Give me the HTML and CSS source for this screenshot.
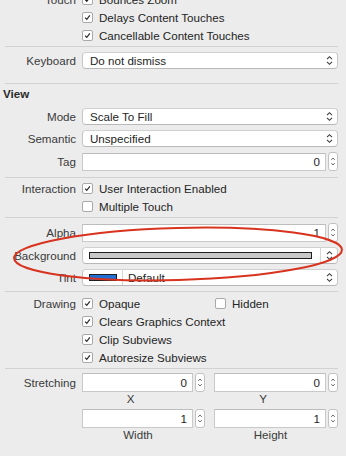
FILE: index.html
```html
<!DOCTYPE html>
<html lang="en">

<head>
    <meta charset="UTF-8">
    <meta name="viewport" content="width=device-width, initial-scale=1.0">
    <title>Attributes Inspector</title>
    <link rel="stylesheet" href="styles.css">
</head>

<body>

    <div class="inspector">

        <!-- scroll view touches -->
        <div class="group group-touch">
            <div class="row check-row">
                <span class="label">Touch</span>
                <span class="check"><span class="box"><svg viewBox="0 0 11 11"><path d="M2.6 5.6 L4.6 7.8 L8.4 2.8"/></svg></span>Bounces Zoom</span>
            </div>
            <div class="row check-row">
                <span class="label"></span>
                <span class="check"><span class="box"><svg viewBox="0 0 11 11"><path d="M2.6 5.6 L4.6 7.8 L8.4 2.8"/></svg></span>Delays Content Touches</span>
            </div>
            <div class="row check-row">
                <span class="label"></span>
                <span class="check"><span class="box"><svg viewBox="0 0 11 11"><path d="M2.6 5.6 L4.6 7.8 L8.4 2.8"/></svg></span>Cancellable Content Touches</span>
            </div>
        </div>

        <div class="group group-keyboard">
            <div class="row">
                <span class="label">Keyboard</span>
                <div class="popup">
                    <span class="popup-text">Do not dismiss</span>
                    <svg class="chevrons" viewBox="0 0 7 11"><path d="M1 4.2 L3.5 1.7 L6 4.2 M1 6.8 L3.5 9.3 L6 6.8"/></svg>
                </div>
            </div>
        </div>

        <!-- view section -->
        <h3 class="heading">View</h3>
        <div class="group group-view">
            <div class="row">
                <span class="label">Mode</span>
                <div class="popup">
                    <span class="popup-text">Scale To Fill</span>
                    <svg class="chevrons" viewBox="0 0 7 11"><path d="M1 4.2 L3.5 1.7 L6 4.2 M1 6.8 L3.5 9.3 L6 6.8"/></svg>
                </div>
            </div>
            <div class="row">
                <span class="label">Semantic</span>
                <div class="popup">
                    <span class="popup-text">Unspecified</span>
                    <svg class="chevrons" viewBox="0 0 7 11"><path d="M1 4.2 L3.5 1.7 L6 4.2 M1 6.8 L3.5 9.3 L6 6.8"/></svg>
                </div>
            </div>
            <div class="row">
                <span class="label">Tag</span>
                <div class="number">
                    <span class="field">0</span>
                    <span class="stepper"><svg viewBox="0 0 10 18"><path d="M2.8 7 L5 4.6 L7.2 7 M2.8 11 L5 13.4 L7.2 11"/></svg></span>
                </div>
            </div>
        </div>

        <div class="group group-interaction">
            <div class="row check-row">
                <span class="label">Interaction</span>
                <span class="check"><span class="box"><svg viewBox="0 0 11 11"><path d="M2.6 5.6 L4.6 7.8 L8.4 2.8"/></svg></span>User Interaction Enabled</span>
            </div>
            <div class="row check-row">
                <span class="label"></span>
                <span class="check"><span class="box"></span>Multiple Touch</span>
            </div>
        </div>

        <div class="group group-color">
            <div class="row">
                <span class="label">Alpha</span>
                <div class="number">
                    <span class="field">1</span>
                    <span class="stepper"><svg viewBox="0 0 10 18"><path d="M2.8 7 L5 4.6 L7.2 7 M2.8 11 L5 13.4 L7.2 11"/></svg></span>
                </div>
            </div>
            <div class="row">
                <span class="label">Background</span>
                <div class="popup color-popup">
                    <span class="well"><span class="swatch swatch-wide"></span></span>
                    <svg class="chevrons" viewBox="0 0 7 11"><path d="M1 4.2 L3.5 1.7 L6 4.2 M1 6.8 L3.5 9.3 L6 6.8"/></svg>
                </div>
            </div>
            <div class="row">
                <span class="label">Tint</span>
                <div class="popup color-popup">
                    <span class="well well-small"><span class="swatch swatch-tint"></span></span>
                    <span class="popup-text">Default</span>
                    <svg class="chevrons" viewBox="0 0 7 11"><path d="M1 4.2 L3.5 1.7 L6 4.2 M1 6.8 L3.5 9.3 L6 6.8"/></svg>
                </div>
            </div>
        </div>

        <div class="group group-drawing">
            <div class="row check-row">
                <span class="label">Drawing</span>
                <div class="check-pair">
                    <span class="check"><span class="box"><svg viewBox="0 0 11 11"><path d="M2.6 5.6 L4.6 7.8 L8.4 2.8"/></svg></span>Opaque</span>
                    <span class="check"><span class="box"></span>Hidden</span>
                </div>
            </div>
            <div class="row check-row">
                <span class="label"></span>
                <span class="check"><span class="box"><svg viewBox="0 0 11 11"><path d="M2.6 5.6 L4.6 7.8 L8.4 2.8"/></svg></span>Clears Graphics Context</span>
            </div>
            <div class="row check-row">
                <span class="label"></span>
                <span class="check"><span class="box"><svg viewBox="0 0 11 11"><path d="M2.6 5.6 L4.6 7.8 L8.4 2.8"/></svg></span>Clip Subviews</span>
            </div>
            <div class="row check-row">
                <span class="label"></span>
                <span class="check"><span class="box"><svg viewBox="0 0 11 11"><path d="M2.6 5.6 L4.6 7.8 L8.4 2.8"/></svg></span>Autoresize Subviews</span>
            </div>
        </div>

        <div class="group group-stretch">
            <div class="row stretch-row">
                <span class="label">Stretching</span>
                <div class="pair">
                    <div class="cell">
                        <div class="number">
                            <span class="field">0</span>
                            <span class="stepper"><svg viewBox="0 0 10 18"><path d="M2.8 7 L5 4.6 L7.2 7 M2.8 11 L5 13.4 L7.2 11"/></svg></span>
                        </div>
                        <span class="caption caption-short">X</span>
                    </div>
                    <div class="cell">
                        <div class="number">
                            <span class="field">0</span>
                            <span class="stepper"><svg viewBox="0 0 10 18"><path d="M2.8 7 L5 4.6 L7.2 7 M2.8 11 L5 13.4 L7.2 11"/></svg></span>
                        </div>
                        <span class="caption caption-short">Y</span>
                    </div>
                </div>
            </div>
            <div class="row stretch-row">
                <span class="label"></span>
                <div class="pair">
                    <div class="cell">
                        <div class="number">
                            <span class="field">1</span>
                            <span class="stepper"><svg viewBox="0 0 10 18"><path d="M2.8 7 L5 4.6 L7.2 7 M2.8 11 L5 13.4 L7.2 11"/></svg></span>
                        </div>
                        <span class="caption">Width</span>
                    </div>
                    <div class="cell">
                        <div class="number">
                            <span class="field">1</span>
                            <span class="stepper"><svg viewBox="0 0 10 18"><path d="M2.8 7 L5 4.6 L7.2 7 M2.8 11 L5 13.4 L7.2 11"/></svg></span>
                        </div>
                        <span class="caption">Height</span>
                    </div>
                </div>
            </div>
        </div>

        <!-- hand drawn highlight round the Background row -->
        <svg class="highlight" viewBox="0 0 346 456">
            <ellipse cx="178" cy="254" rx="164" ry="26" transform="rotate(-1.5 178 254)"/>
        </svg>

    </div>

</body>

</html>
```

FILE: styles.css
```css
html,
body {
    margin: 0;
    background-color: #ececec;
}

body {
    font-family: 'Liberation Sans', Arial, sans-serif;
    font-size: 11.6px;
    color: #242424;
    overflow: hidden;
}

.inspector {
    position: relative;
    width: 346px;
    height: 456px;
    overflow: hidden;
}

.group {
    margin: 0 8px 0 5px;
    border-bottom: 1px solid #d2d2d2;
    display: flex;
    flex-direction: column;
}

.row {
    display: grid;
    grid-template-columns: 71px 1fr;
    column-gap: 6px;
    align-items: center;
}

.label {
    text-align: right;
    color: #3a3a3a;
    white-space: nowrap;
}

.check-row {
    height: 18px;
}

.check {
    display: flex;
    align-items: center;
    white-space: nowrap;
}

.box {
    width: 9px;
    height: 9px;
    border: 1px solid #a9a9a9;
    border-radius: 2px;
    background-color: #fff;
    margin-right: 6px;
    display: flex;
}

.box svg {
    width: 9px;
    height: 9px;
    fill: none;
    stroke: #262626;
    stroke-width: 1.4;
}

.check-pair {
    display: grid;
    grid-template-columns: 133px 1fr;
}

/* section spacing */
.group-touch {
    margin-top: -10px;
    padding-bottom: 2px;
}

.group-keyboard {
    padding: 5px 0 14px;
}

.heading {
    margin: 0;
    padding: 3px 0 0 3px;
    font-size: 11.6px;
    line-height: 14px;
    font-weight: bold;
    color: #2a2a2a;
}

.group-view {
    padding: 7px 0 6px;
    gap: 5px;
}

.group-interaction {
    padding: 1px 0 2px;
}

.group-color {
    padding: 5px 0 5px;
    gap: 5px;
}

.group-drawing {
    padding: 2px 0 2px;
}

.group-stretch {
    border-bottom: none;
    padding-top: 4px;
    gap: 4px;
}

/* popup buttons */
.popup {
    height: 15px;
    background-color: #fff;
    border: 1px solid #c6c6c6;
    border-top-color: #d0d0d0;
    border-bottom-color: #b8b8b8;
    border-radius: 4px;
    display: flex;
    align-items: center;
    padding: 0 4px 0 7px;
}

.popup-text {
    flex: 1;
    white-space: nowrap;
}

.chevrons {
    width: 7px;
    height: 11px;
    fill: none;
    stroke: #3c3c3c;
    stroke-width: 1.1;
}

.color-popup {
    padding-left: 6px;
}

.well {
    flex: 1;
    align-self: stretch;
    display: flex;
    align-items: center;
    border-right: 1px solid #d6d6d6;
    margin-right: 5px;
    padding-right: 8px;
}

.well-small {
    flex: 0 0 auto;
    padding-right: 5px;
    margin-right: 5px;
}

.swatch {
    height: 5px;
    border: 1px solid #1e1e1e;
}

.swatch-wide {
    flex: 1;
    background-color: #c8c8c8;
}

.swatch-tint {
    width: 26px;
    background-color: #1f6fd4;
}

/* number fields with steppers */
.number {
    display: flex;
    align-items: center;
    gap: 2px;
}

.field {
    flex: 1;
    height: 16px;
    line-height: 16px;
    background-color: #fff;
    border: 1px solid #c9c9c9;
    border-top-color: #bdbdbd;
    text-align: right;
    padding-right: 5px;
}

.stepper {
    width: 8px;
    height: 17px;
    border: 1px solid #c2c2c2;
    border-radius: 3px;
    background-color: #fff;
    display: flex;
}

.stepper svg {
    width: 8px;
    height: 17px;
    fill: none;
    stroke: #4a4a4a;
    stroke-width: 1;
}

.pair {
    display: grid;
    grid-template-columns: 123px 1fr;
    column-gap: 9px;
}

.cell {
    display: flex;
    flex-direction: column;
}

.cell .field {
    height: 17px;
    line-height: 17px;
}

.caption {
    text-align: center;
    line-height: 13px;
    padding-right: 11px;
    color: #3a3a3a;
}

.caption-short {
    padding-right: 26px;
}

.stretch-row {
    align-items: start;
}

.stretch-row .label {
    line-height: 19px;
}

/* red marker ellipse */
.highlight {
    position: absolute;
    left: 0;
    top: 0;
    width: 346px;
    height: 456px;
    pointer-events: none;
}

.highlight ellipse {
    fill: none;
    stroke: #d8331f;
    stroke-width: 2;
}
```
